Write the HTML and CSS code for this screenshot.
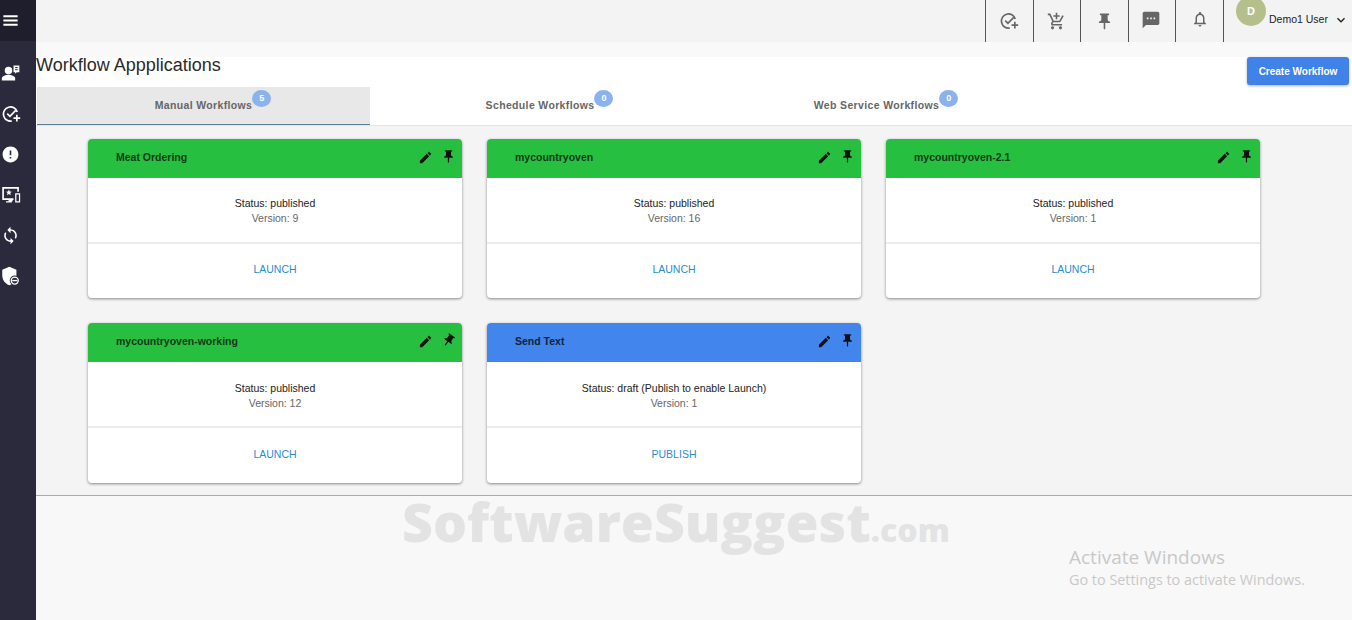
FILE: index.html
```html
<!DOCTYPE html>
<html lang="en">
<head>
    <meta charset="UTF-8">
    <meta name="viewport" content="width=device-width, initial-scale=1.0">
    <title>Workflow Applications</title>
    <link rel="stylesheet" href="styles.css">
</head>
<body>

    <!-- shared icons -->
    <svg class="icon-defs" aria-hidden="true">
        <symbol id="i-edit" viewBox="0 0 24 24"><path d="M3 17.25V21h3.75L17.81 9.94l-3.75-3.75L3 17.25zM20.71 7.04c.39-.39.39-1.02 0-1.41l-2.34-2.34c-.39-.39-1.02-.39-1.41 0l-1.83 1.83 3.75 3.75 1.83-1.83z"/></symbol>
        <symbol id="i-pin" viewBox="0 0 24 24"><path d="M16 9V4h1c.55 0 1-.45 1-1s-.45-1-1-1H7c-.55 0-1 .45-1 1s.45 1 1 1h1v5c0 1.66-1.34 3-3 3v2h5.97v7l1 1 1-1v-7H19v-2c-1.66 0-3-1.34-3-3z"/></symbol>
        <symbol id="i-check-plus" viewBox="0 0 24 24"><path d="M19.5 9.5A8.5 8.5 0 1 0 13 20.4" fill="none" stroke="currentColor" stroke-width="2"/><path d="M7.5 11.5l3.2 3.2 7-7" fill="none" stroke="currentColor" stroke-width="2"/><path d="M18 13h2v3h3v2h-3v3h-2v-3h-3v-2h3z"/></symbol>
    </svg>

    <!-- side menu -->
    <nav class="sidebar">
        <div class="menu-btn">
            <svg width="19" height="19" viewBox="0 0 24 24"><path d="M3 18.500h18v-2.500H3zm0-5.200h18v-2.500H3zM3 5.500v2.500h18V5.500z"/></svg>
        </div>
        <div class="side-icons">
            <svg width="20" height="20" viewBox="0 0 24 24"><circle cx="9" cy="9" r="4.500"/><path d="M1 21v-2.500c0-3 5-4.500 8-4.500s8 1.500 8 4.500V21z"/><path d="M15 3h7v8h-3l-2 2v-2h-2z"/><path d="M17 5.500h3M17 8h3" stroke="#2b2a3d" stroke-width="1.200"/></svg>
            <svg width="20" height="20" viewBox="0 0 24 24"><use href="#i-check-plus"/></svg>
            <svg width="19" height="19" viewBox="0 0 24 24"><path d="M12 2C6.480 2 2 6.480 2 12s4.480 10 10 10 10-4.480 10-10S17.520 2 12 2zm1 15h-2v-2h2v2zm0-4h-2V7h2v6z"/></svg>
            <svg width="20" height="20" viewBox="0 0 24 24"><path d="M15 17H2.500V3.500h18V8" fill="none" stroke="currentColor" stroke-width="2"/><path d="M9.500 5.500l1 2.400 2.500.2-1.900 1.600.6 2.500-2.200-1.300-2.200 1.300.6-2.500L6 8.100l2.500-.2z"/><path d="M7 17h7v2.500h-1V21H6v-1.500h3V17z"/><path d="M17 10h6v11h-6zm1.500 1.500v8h3v-8z"/></svg>
            <svg width="19" height="19" viewBox="0 0 24 24"><path d="M12 4V1L8 5l4 4V6c3.310 0 6 2.690 6 6 0 1.010-.25 1.970-.7 2.800l1.460 1.460C19.540 15.030 20 13.570 20 12c0-4.420-3.580-8-8-8zm0 14c-3.310 0-6-2.690-6-6 0-1.010.25-1.970.7-2.800L5.240 7.740C4.460 8.970 4 10.430 4 12c0 4.420 3.580 8 8 8v3l4-4-4-4v3z"/></svg>
            <svg width="20" height="20" viewBox="0 0 24 24"><path d="M10 1l8.500 3.500V11c0 6-3.800 10.500-8.500 12C5.300 21.500 1.500 17 1.500 11V4.500z"/><circle cx="16.500" cy="17.500" r="6" fill="#2b2a3d"/><circle cx="16.500" cy="17.500" r="4.200" fill="none" stroke="currentColor" stroke-width="1.600"/><path d="M13.500 17.500h6" stroke="currentColor" stroke-width="1.600"/></svg>
        </div>
    </nav>

    <div class="page">
        <!-- top bar -->
        <header class="topbar">
            <div class="top-item">
                <svg width="20" height="20" viewBox="0 0 24 24"><use href="#i-check-plus"/></svg>
            </div>
            <div class="top-item">
                <svg width="19" height="19" viewBox="0 0 24 24"><path d="M11 9h2V6h3V4h-3V1h-2v3H8v2h3v3zm-4 9c-1.100 0-1.990.9-1.990 2S5.900 22 7 22s2-.9 2-2-.9-2-2-2zm10 0c-1.100 0-1.990.9-1.990 2s.89 2 1.990 2 2-.9 2-2-.9-2-2-2zm-9.830-3.250l.03-.12.9-1.630h7.450c.75 0 1.410-.41 1.750-1.030l3.860-7.010L19.420 4h-.01l-1.100 2-2.760 5H8.530l-.13-.27L6.160 6l-.95-2-.94-2H1v2h2l3.600 7.590-1.350 2.450c-.16.28-.25.61-.25.96 0 1.100.9 2 2 2h12v-2H7.420c-.13 0-.25-.11-.25-.25z"/></svg>
            </div>
            <div class="top-item">
                <svg width="19" height="19" viewBox="0 0 24 24"><use href="#i-pin"/></svg>
            </div>
            <div class="top-item top-chat">
                <svg width="20" height="20" viewBox="0 0 24 24"><path d="M20 2H4c-1.100 0-1.990.9-1.990 2L2 22l4-4h14c1.100 0 2-.9 2-2V4c0-1.100-.9-2-2-2zM9 11H7V9h2v2zm4 0h-2V9h2v2zm4 0h-2V9h2v2z"/></svg>
            </div>
            <div class="top-item top-bell">
                <svg width="18" height="18" viewBox="0 0 24 24"><path d="M12 22c1.100 0 2-.9 2-2h-4c0 1.100.9 2 2 2zm6-6v-5c0-3.070-1.630-5.640-4.500-6.320V4c0-.83-.67-1.500-1.500-1.500s-1.500.67-1.500 1.500v.68C7.640 5.360 6 7.920 6 11v5l-2 2v1h16v-1l-2-2zm-2 1H8v-6c0-2.480 1.510-4.500 4-4.500s4 2.020 4 4.500v6z"/></svg>
            </div>
            <div class="user-box">
                <span class="avatar">D</span>
                <span class="user-name">Demo1 User</span>
                <svg width="16" height="16" viewBox="0 0 24 24"><path d="M7.410 8.590L12 13.170l4.590-4.580L18 10l-6 6-6-6z"/></svg>
            </div>
        </header>
        <div class="subbar"></div>

        <!-- tabs -->
        <section class="title-area">
            <div class="title-row">
                <h1>Workflow Appplications</h1>
                <button class="create-btn">Create Workflow</button>
            </div>
            <div class="tabs">
                <div class="tab active"><span class="tab-label">Manual Workflows<span class="badge">5</span></span></div>
                <div class="tab"><span class="tab-label">Schedule Workflows<span class="badge">0</span></span></div>
                <div class="tab"><span class="tab-label">Web Service Workflows<span class="badge">0</span></span></div>
            </div>
        </section>

        <!-- cards -->
        <main class="cards">
            <div class="card">
                <div class="card-head">
                    <span class="card-title">Meat Ordering</span>
                    <svg class="edit-icon" viewBox="0 0 24 24"><use href="#i-edit"/></svg>
                    <svg class="pin-icon" viewBox="0 0 24 24"><use href="#i-pin"/></svg>
                </div>
                <div class="card-info">
                    <div class="status">Status: published</div>
                    <div class="version">Version: 9</div>
                </div>
                <div class="card-action"><a href="#">LAUNCH</a></div>
            </div>
            <div class="card">
                <div class="card-head">
                    <span class="card-title">mycountryoven</span>
                    <svg class="edit-icon" viewBox="0 0 24 24"><use href="#i-edit"/></svg>
                    <svg class="pin-icon" viewBox="0 0 24 24"><use href="#i-pin"/></svg>
                </div>
                <div class="card-info">
                    <div class="status">Status: published</div>
                    <div class="version">Version: 16</div>
                </div>
                <div class="card-action"><a href="#">LAUNCH</a></div>
            </div>
            <div class="card">
                <div class="card-head">
                    <span class="card-title">mycountryoven-2.1</span>
                    <svg class="edit-icon" viewBox="0 0 24 24"><use href="#i-edit"/></svg>
                    <svg class="pin-icon" viewBox="0 0 24 24"><use href="#i-pin"/></svg>
                </div>
                <div class="card-info">
                    <div class="status">Status: published</div>
                    <div class="version">Version: 1</div>
                </div>
                <div class="card-action"><a href="#">LAUNCH</a></div>
            </div>
            <div class="card">
                <div class="card-head">
                    <span class="card-title">mycountryoven-working</span>
                    <svg class="edit-icon" viewBox="0 0 24 24"><use href="#i-edit"/></svg>
                    <svg class="pin-icon pinned" viewBox="0 0 24 24"><use href="#i-pin"/></svg>
                </div>
                <div class="card-info">
                    <div class="status">Status: published</div>
                    <div class="version">Version: 12</div>
                </div>
                <div class="card-action"><a href="#">LAUNCH</a></div>
            </div>
            <div class="card">
                <div class="card-head draft">
                    <span class="card-title">Send Text</span>
                    <svg class="edit-icon" viewBox="0 0 24 24"><use href="#i-edit"/></svg>
                    <svg class="pin-icon" viewBox="0 0 24 24"><use href="#i-pin"/></svg>
                </div>
                <div class="card-info">
                    <div class="status">Status: draft (Publish to enable Launch)</div>
                    <div class="version">Version: 1</div>
                </div>
                <div class="card-action"><a href="#">PUBLISH</a></div>
            </div>
        </main>
        <div class="page-foot"></div>
    </div>

    <!-- overlays on the screenshot -->
    <div class="watermark">SoftwareSuggest<span class="watermark-com">.com</span></div>
    <div class="activate">
        <div class="activate-title">Activate Windows</div>
        <div class="activate-sub">Go to Settings to activate Windows.</div>
    </div>

</body>
</html>
```

FILE: styles.css
```css
html, body {
    height: 100%;
}
body {
    font-family: 'Liberation Sans', Arial, sans-serif;
    margin: 0;
    display: flex;
    overflow: hidden;
    background-color: #f8f8f8;
    color: #222;
}
.icon-defs {
    display: none;
}

/* side menu */
.sidebar {
    width: 36px;
    flex-shrink: 0;
    background-color: #2b2a3d;
    color: white;
    fill: white;
}
.menu-btn {
    height: 41px;
    box-sizing: border-box;
    padding-left: 1px;
    background-color: #1f1e2d;
    display: flex;
    align-items: center;
}
.side-icons {
    display: flex;
    flex-direction: column;
    align-items: flex-start;
    gap: 21px;
    padding: 22px 0 0 1px;
}
.side-icons svg {
    display: block;
}

/* top bar */
.page {
    flex: 1;
    min-width: 0;
    display: flex;
    flex-direction: column;
}
.topbar {
    height: 42px;
    background-color: #f3f3f3;
    display: flex;
    justify-content: flex-end;
    color: #666;
    fill: #666;
}
.top-item {
    width: 47.6px;
    box-sizing: border-box;
    border-left: 1px solid #555;
    display: flex;
    align-items: center;
    justify-content: center;
}
.top-bell svg {
    margin-top: -5px;
}
.top-chat svg {
    margin: -2px 3px 0 0;
}
.user-box {
    width: 129px;
    box-sizing: border-box;
    border-left: 1px solid #555;
    display: flex;
    align-items: center;
    position: relative;
    color: #222;
    fill: #222;
    font-size: 10.5px;
}
.avatar {
    position: absolute;
    left: 12px;
    top: -4px;
    width: 30px;
    height: 30px;
    border-radius: 50%;
    background-color: #b5bf8c;
    color: white;
    font-size: 11px;
    font-weight: bold;
    display: flex;
    align-items: center;
    justify-content: center;
}
.user-name {
    margin-left: 45px;
    margin-top: -5px;
    width: 64px;
}
.user-box svg {
    margin-top: -3px;
}
.subbar {
    height: 15px;
    background-color: #f9f9f9;
}

/* title and tabs */
.title-area {
    background: white;
    border-bottom: 1px solid #e4e4e4;
}
.title-row {
    height: 30px;
    display: flex;
    justify-content: space-between;
    align-items: flex-start;
    padding-right: 3px;
}
h1 {
    margin: 0;
    font-size: 18px;
    font-weight: normal;
    line-height: 16px;
    color: #2a2a2a;
}
.create-btn {
    background-color: #3f83e8;
    color: white;
    border: none;
    border-radius: 3px;
    width: 102px;
    height: 28px;
    padding: 0;
    font-family: inherit;
    font-size: 10px;
    font-weight: bold;
    box-shadow: 0 1px 3px rgba(0, 0, 0, 0.3);
    cursor: pointer;
}
.tabs {
    display: grid;
    grid-template-columns: 333px 340px 333px;
    margin-left: 1px;
    height: 38px;
}
.tab {
    display: flex;
    align-items: center;
    justify-content: center;
    box-sizing: border-box;
    padding-bottom: 2px;
    font-size: 10.5px;
    font-weight: bold;
    letter-spacing: 0.35px;
    color: #666;
}
.tab.active {
    background-color: #e8e8e8;
    border-bottom: 1px solid #5b7f95;
}
.tab-label {
    position: relative;
}
.badge {
    position: absolute;
    right: -19px;
    top: -9px;
    width: 19px;
    height: 17px;
    border-radius: 50%;
    background-color: #8ab2ee;
    color: white;
    font-size: 9px;
    letter-spacing: 0;
    text-align: center;
    line-height: 17px;
}

/* workflow cards */
.cards {
    height: 370px;
    flex-shrink: 0;
    box-sizing: border-box;
    background-color: #f4f4f4;
    border-bottom: 1px solid #aaa;
    padding: 13px 0 0 52px;
    display: grid;
    grid-template-columns: repeat(3, 374px);
    grid-auto-rows: 159.4px;
    column-gap: 25px;
    row-gap: 25px;
    align-content: start;
}
.card {
    background: white;
    border-radius: 4px;
    box-shadow: 0 1px 3px rgba(0, 0, 0, 0.45);
    display: flex;
    flex-direction: column;
    overflow: hidden;
}
.card-head {
    height: 39px;
    flex-shrink: 0;
    box-sizing: border-box;
    background-color: #26bf40;
    display: flex;
    align-items: center;
    padding: 0 6.5px 4px 28px;
    fill: #111;
}
.card-head.draft {
    background-color: #4285ec;
}
.card-title {
    flex: 1;
    font-size: 10.5px;
    font-weight: bold;
    color: #113a18;
}
.card-head.draft .card-title {
    color: #0f2440;
}
.edit-icon {
    width: 15px;
    height: 15px;
    margin: 2px 8px 0 0;
}
.pin-icon {
    width: 15px;
    height: 15px;
}
.pin-icon.pinned {
    transform: rotate(35deg);
}
.card-info {
    height: 66px;
    flex-shrink: 0;
    box-sizing: border-box;
    border-bottom: 2px solid #ececec;
    padding-top: 18.3px;
    text-align: center;
    font-size: 10.5px;
    line-height: 15px;
}
.version {
    color: #666;
}
.card-action {
    flex: 1;
    display: flex;
    align-items: center;
    justify-content: center;
    font-size: 10.5px;
    padding-bottom: 4px;
}
.card-action a {
    color: #2a8bd0;
    text-decoration: none;
}
.page-foot {
    flex: 1;
    background-color: #f8f8f8;
}

/* screenshot overlays */
.watermark {
    position: absolute;
    left: 402px;
    top: 491px;
    font-family: 'Open Sans', sans-serif;
    font-size: 53.5px;
    font-weight: 800;
    line-height: 62px;
    color: #e3e3e3;
    white-space: nowrap;
}
.watermark-com {
    font-size: 32px;
}
.activate {
    position: absolute;
    left: 1069px;
    top: 545px;
    font-family: 'Open Sans', sans-serif;
    color: #c8c8c8;
}
.activate-title {
    font-size: 19px;
    line-height: 24px;
}
.activate-sub {
    font-size: 14.4px;
    line-height: 22px;
}
```
